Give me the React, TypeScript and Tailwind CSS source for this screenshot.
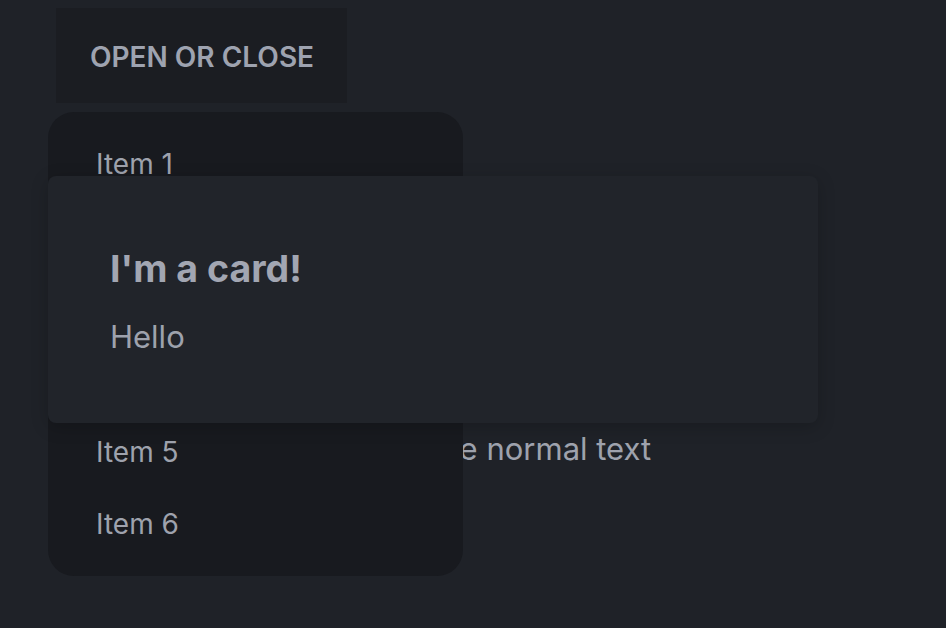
import React from 'react';

const items = ['Item 1', 'Item 2', 'Item 3', 'Item 4', 'Item 5', 'Item 6'];

export default function App() {
  return (
    <div className="relative min-h-screen bg-[#1f2228] pt-2 text-[#9ea2ad]" style={{ fontFamily: 'Inter, "Noto Sans", sans-serif' }}>
      <button className="ml-14 flex h-[95px] w-[291px] items-center bg-[#1b1d22] pl-[34px] pt-[2px] text-[28px] font-semibold text-[#9ea3b0]">
        OPEN OR CLOSE
      </button>

      <div className="relative z-20 ml-12 mt-[73px] w-[770px] rounded-lg bg-[#21242a] px-[62px] pt-[69px] pb-[66px] shadow-[0_4px_18px_rgba(0,0,0,0.2)]">
        <h2 className="text-[37.5px] font-bold leading-[48px] text-[#a2a6b2]">I'm a card!</h2>
        <p className="mt-[24px] text-[31px] leading-[40px]">Hello</p>
      </div>

      <p className="ml-[58px] mt-[6px] text-[31px] leading-[40px]">Lorem ipsum, where is some normal text</p>

      <div className="absolute left-12 top-[112px] z-10 w-[415px] rounded-[26px] bg-[#181a1f] py-4">
        {items.map((item) => (
          <div key={item} className="flex h-[72px] items-center pl-12 text-[28px]">
            {item}
          </div>
        ))}
      </div>
    </div>
  );
}
